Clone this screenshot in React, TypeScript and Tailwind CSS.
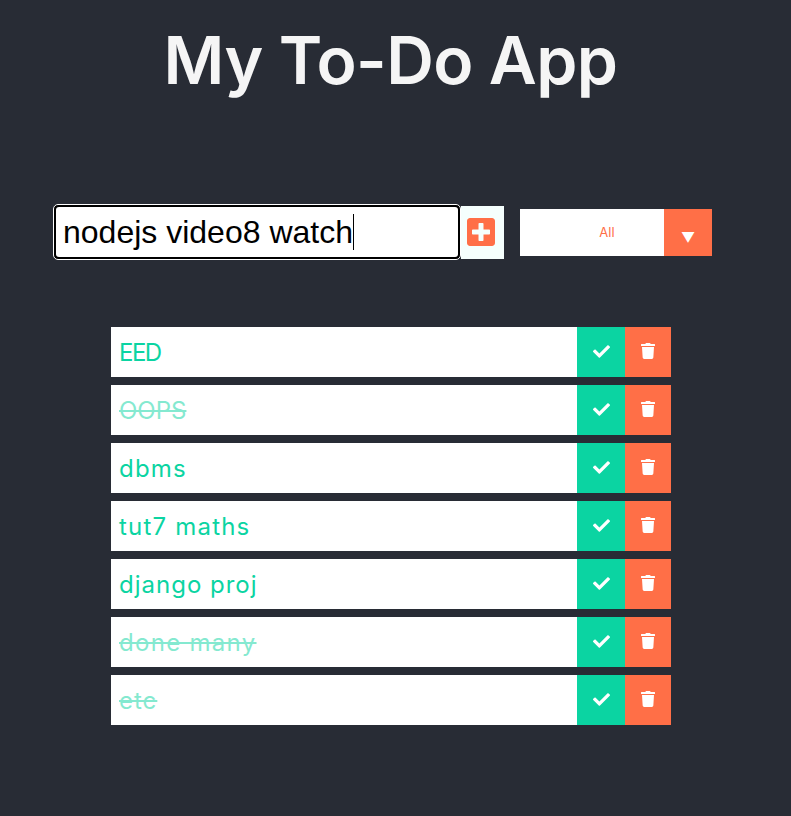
import { FaCheck, FaPlusSquare, FaTrash } from "react-icons/fa";

const todos = [
  { text: "EED", done: false, spacing: "tracking-[-1.5px]" },
  { text: "OOPS", done: true, spacing: "tracking-normal" },
  { text: "dbms", done: false, spacing: "tracking-[1.2px]" },
  { text: "tut7 maths", done: false, spacing: "tracking-[1.2px]" },
  { text: "django proj", done: false, spacing: "tracking-[1px]" },
  { text: "done many", done: true, spacing: "tracking-[1.3px]" },
  { text: "etc", done: true, spacing: "tracking-[1px]" },
];

function TodoRow({ text, done, spacing }: { text: string; done: boolean; spacing: string }) {
  return (
    <li className="flex h-[50px] w-[560px] bg-white">
      <span className={`flex-1 pl-2 text-[24px] leading-[52px] text-[#0bd4a2] ${spacing} ${done ? "line-through opacity-50" : ""}`}>
        {text}
      </span>
      <button className="flex w-[48px] items-center justify-center bg-[#0bd4a2] pb-[2px] text-white">
        <FaCheck size={17} />
      </button>
      <button className="flex w-[46px] items-center justify-center bg-[#ff6f47] pb-[2px] text-white">
        <FaTrash size={16} />
      </button>
    </li>
  );
}

export default function App() {
  return (
    <div className="flex min-h-[816px] flex-col bg-[#282c35] font-['Inter',sans-serif]">
      <header className="flex h-[120px] items-start justify-center pr-[10px] pt-[15px]">
        <h1 className="text-[66px] font-semibold leading-[90px] tracking-[-0.6px] text-[#f5f5f5]">My To-Do App</h1>
      </header>

      <form className="ml-[53px] mt-[84px] flex items-center">
        <div className="relative flex h-[56px] w-[408px] items-center rounded-[5px] border border-white bg-black p-[2px]">
          <div className="flex h-full w-full items-center rounded-[3px] bg-white pl-[7px] font-['Liberation_Sans',sans-serif] text-[32px] text-black">
            nodejs video8 watch
            <span className="h-[36px] w-px bg-black" />
          </div>
        </div>
        <button type="button" className="flex h-[53px] w-[43px] items-center justify-center bg-[#f5fffd] pr-[3px] text-[#ff6f47]">
          <FaPlusSquare size={32} />
        </button>
        <div className="ml-4 flex h-[47px] w-[192px] bg-white">
          <span className="flex-1 pl-[30px] text-center text-[13px] leading-[47px] text-[#ff6f47]">All</span>
          <span className="flex w-[48px] items-center justify-center bg-[#ff6f47] pt-[11px] text-[14px] text-white">▼</span>
        </div>
      </form>

      <ul className="ml-[111px] mt-[67px] flex flex-col gap-2">
        {todos.map((todo) => (
          <TodoRow key={todo.text} text={todo.text} done={todo.done} spacing={todo.spacing} />
        ))}
      </ul>
    </div>
  );
}
